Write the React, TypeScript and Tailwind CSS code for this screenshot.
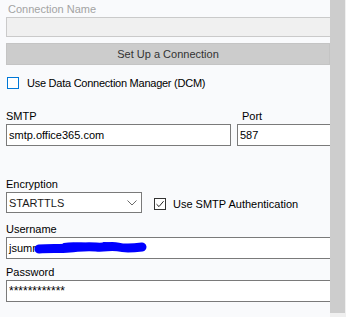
import { useState } from 'react';

const font = { fontFamily: '"Liberation Sans", Arial, sans-serif' };

function Checkbox({ checked, blue }: { checked?: boolean; blue?: boolean }) {
    return (
        <span
            className={`flex h-[12px] w-[12px] shrink-0 items-center justify-center border bg-white ${blue ? 'border-[#0078d7]' : 'border-[#333333]'}`}
        >
            {checked && (
                <svg width="10" height="10" viewBox="0 0 10 10" fill="none">
                    <path d="M1.5 5.2 L4 7.6 L8.6 2.2" stroke="#222222" strokeWidth="1" />
                </svg>
            )}
        </span>
    );
}

export default function App() {
    const [useDcm] = useState(false);
    const [useAuth] = useState(true);

    return (
        <div className="flex h-[317px] w-[346px] overflow-hidden bg-[#f9fafc] text-[11px] leading-[14px] text-black" style={font}>
            {/* Form */}
            <div className="flex w-[330px] shrink-0 flex-col overflow-hidden pl-[6px]">
                <span className="mt-[2px] h-[14px] pl-[2px] text-[#a3a3a3]">Connection Name</span>
                <div className="mt-[1px] h-[20px] w-[326px] shrink-0 border border-[#cacaca] bg-[#f0f0f0]" />

                <button className="mt-[6px] h-[22px] w-[324px] shrink-0 border border-[#c4c4c4] bg-[#cccccc] text-[#333333]">
                    Set Up a Connection
                </button>

                <label className="mt-[12px] flex h-[12px] items-center gap-[8px] pl-[1px]">
                    <Checkbox checked={useDcm} blue />
                    <span className="tracking-[-0.25px]">Use Data Connection Manager (DCM)</span>
                </label>

                {/* SMTP / Port */}
                <div className="mt-[20px] flex gap-[6px]">
                    <div className="flex w-[225px] shrink-0 flex-col">
                        <span className="h-[14px]">SMTP</span>
                        <input
                            readOnly
                            value="smtp.office365.com"
                            className="mt-[1px] h-[22px] border border-[#7a7a7a] bg-white px-[2px] outline-none"
                        />
                    </div>
                    <div className="flex w-[100px] shrink-0 flex-col">
                        <span className="h-[14px] pl-[5px]">Port</span>
                        <input
                            readOnly
                            value="587"
                            className="mt-[1px] h-[22px] border border-[#7a7a7a] bg-white px-[2px] outline-none"
                        />
                    </div>
                </div>

                {/* Encryption */}
                <span className="mt-[31px] h-[14px]">Encryption</span>
                <div className="mt-[1px] flex items-start gap-[12px]">
                    <div className="flex h-[21px] w-[136px] shrink-0 items-center justify-between border border-[#7a7a7a] bg-white pl-[2px] pr-[4px] text-[#1a1a1a]">
                        <span>STARTTLS</span>
                        <svg width="10" height="6" viewBox="0 0 10 6" fill="none">
                            <path d="M0.5 0.5 L5 5 L9.5 0.5" stroke="#6a6a6a" strokeWidth="1" />
                        </svg>
                    </div>
                    <label className="mt-[6px] flex h-[12px] items-center gap-[7px]">
                        <Checkbox checked={useAuth} />
                        <span>Use SMTP Authentication</span>
                    </label>
                </div>

                {/* Credentials */}
                <span className="mt-[9px] h-[14px]">Username</span>
                <div className="mt-[1px] flex h-[22px] w-[326px] shrink-0 items-center border border-[#7a7a7a] bg-white px-[2px]">
                    <span>jsumn</span>
                    <svg className="-ml-[4px]" width="114" height="14" viewBox="0 0 114 14" fill="none">
                        <path
                            d="M5 8 C 16 7, 24 8, 36 7 S 52 5, 62 6 S 76 4, 84 6 S 100 7, 108 6"
                            stroke="#0000ff"
                            strokeWidth="9"
                            strokeLinecap="round"
                        />
                        <path d="M30 3.5 C 40 2, 48 3, 56 4 M 70 2.5 L 80 3.5" stroke="#0000ff" strokeWidth="3" strokeLinecap="round" />
                    </svg>
                </div>

                <span className="mt-[6px] h-[14px]">Password</span>
                <input
                    readOnly
                    value="************"
                    className="mt-[1px] h-[22px] w-[326px] shrink-0 border border-[#7a7a7a] bg-white px-[2px] text-[12px] outline-none"
                />
            </div>

            {/* Scrollbar */}
            <div className="flex w-[15px] shrink-0 flex-col">
                <div className="h-[313px] bg-[#cdcdcd]" />
                <div className="flex-1 bg-[#f0f0f0]" />
            </div>
            <div className="flex-1 bg-[#f0f0f0]" />
        </div>
    );
}
